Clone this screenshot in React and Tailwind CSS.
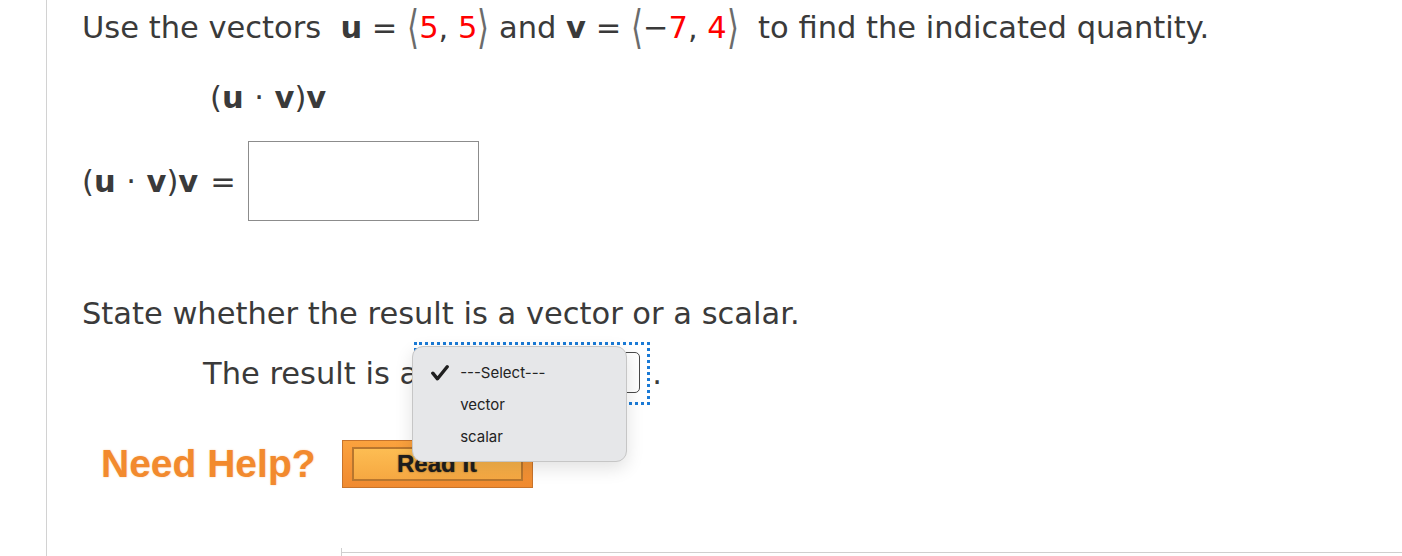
import React from 'react';

const Br = ({ children }) => (
  <span className="inline-block scale-y-[1.5] text-[#6b6b6b] font-light">{children}</span>
);

const Red = ({ children }) => <span className="text-[#ff0000]">{children}</span>;

const Check = () => (
  <svg width="18" height="16" viewBox="0 0 18 16" className="absolute left-[18px] top-[18px]">
    <path d="M1.8 8.2 L6.5 13.8 L16.2 1.8" fill="none" stroke="#1f1f1f" strokeWidth="3.4" strokeLinecap="round" strokeLinejoin="round" />
  </svg>
);

const UdotV = () => (
  <span className="font-bold">
    <span className="font-normal">(</span>u <span className="font-normal">·</span> v<span className="font-normal">)</span>v
  </span>
);

const App = () => {
  return (
    <div className="relative h-[556px] w-[1402px] overflow-hidden bg-white">
      <div className="ml-[46px] h-full border-l border-[#d2d2d2] pl-[35px] text-[30.5px] leading-[35px] text-[#3a3a3a] font-['DejaVu_Sans',Verdana,sans-serif]">
        <div className="pt-[10px] whitespace-nowrap">
          Use the vectors&nbsp; <b>u</b> = <Br>⟨</Br><Red>5</Red>, <Red>5</Red><Br>⟩</Br> and <b>v</b> ={' '}
          <Br>⟨</Br>−<Red>7</Red>, <Red>4</Red><Br>⟩</Br>&nbsp; to find the indicated quantity.
        </div>

        <div className="mt-[35px] pl-[128px]">
          <UdotV />
        </div>

        <div className="mt-[26px] flex items-center">
          <UdotV />
          <span className="ml-[12px]">=</span>
          <div className="ml-[12px] h-[80px] w-[231px] border-[1.5px] border-[#8c8c8c] bg-white" />
        </div>

        <div className="mt-[75px]">State whether the result is a vector or a scalar.</div>

        <div className="mt-[11px] flex items-center pl-[121px]">
          <span>The result is a</span>
          <span className="relative ml-[-4px] border-[3px] border-dotted border-[#1a7ad6] pb-[9px] pl-px pr-[7px] pt-[7px]">
            <span className="block h-[41px] w-[222px] rounded-[5px] border-[1.5px] border-[#4a4a4a] bg-white" />
            <div className="absolute left-[-5px] top-[1px] z-10 h-[116px] w-[215px] rounded-[11px] border border-[#c6c6c6] bg-[#e6e7e9] pt-[10px] shadow-[0_6px_18px_rgba(0,0,0,0.12)] font-['Inter',sans-serif] text-[15px] leading-[32px] text-[#232323]">
              <Check />
              <div className="pl-[47px]">---Select---</div>
              <div className="pl-[47px]">vector</div>
              <div className="pl-[47px]">scalar</div>
            </div>
          </span>
          <span className="ml-[2px]">.</span>
        </div>

        <div className="mt-[35px] flex items-center pl-[19px]">
          <span className="font-['Liberation_Sans',Arial,sans-serif] text-[39px] font-bold leading-[48px] text-[#f28a2e] [text-shadow:0_0_2px_rgba(242,138,46,0.4)]">
            Need Help?
          </span>
          <div className="ml-[26px] flex h-[48px] w-[191px] items-center justify-center border border-[#c8742c] bg-gradient-to-b from-[#fba23e] to-[#f08a30] px-[9px] py-[6px]">
            <div className="flex h-full w-full items-center justify-center border-2 border-[#b8762e] bg-gradient-to-b from-[#fdbd52] to-[#f6a842] font-['Liberation_Sans',Arial,sans-serif] text-[24px] font-bold leading-none text-[#1e1e1e] [text-shadow:0_0_1.5px_rgba(0,0,0,0.7)]">
              Read It
            </div>
          </div>
        </div>
      </div>

      <div className="absolute bottom-[3px] left-[341px] right-0 h-px bg-[#cfcfcf]" />
      <div className="absolute bottom-0 left-[341px] h-[8px] w-px bg-[#cfcfcf]" />
    </div>
  );
};

export default App;
